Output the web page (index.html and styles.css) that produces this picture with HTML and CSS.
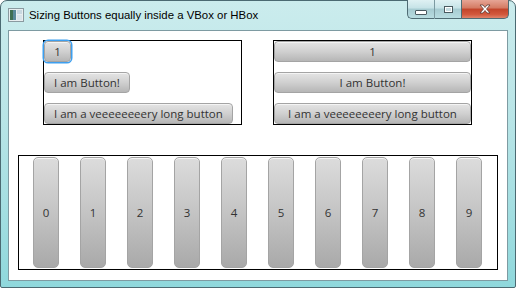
FILE: index.html
```html
<!DOCTYPE html>
<html>
<head>
<meta charset="utf-8">
<link rel="stylesheet" href="styles.css">
</head>
<body>
<div class="window">
  <div class="titlebar">
    <svg class="app-icon" width="16" height="14" viewBox="0 0 16 14">
      <rect x="0.5" y="0.5" width="15" height="13" fill="#e8eef0" stroke="#8a9aa0"/>
      <rect x="2" y="2" width="6" height="10" fill="#5a8a9a"/>
      <rect x="2" y="2" width="3" height="10" fill="#3f6f52"/>
      <rect x="9" y="2" width="5" height="4" fill="#c8d8e0"/>
      <rect x="9" y="7" width="5" height="5" fill="#d8e4ea"/>
    </svg>
    <span class="title">Sizing Buttons equally inside a VBox or HBox</span>
    <div class="caption">
      <div class="cap cap-min"><span class="min-glyph"></span></div>
      <div class="cap cap-max"><span class="max-glyph"></span></div>
      <div class="cap cap-close">
        <svg width="16" height="10" viewBox="0 0 16 10">
          <path d="M3 1 L6 1 L8 3.5 L10 1 L13 1 L9.5 5 L13 9 L10 9 L8 6.5 L6 9 L3 9 L6.5 5 Z" fill="#fff" stroke="#5a3a35" stroke-width="0.8"/>
        </svg>
      </div>
    </div>
  </div>
  <div class="content">
    <div class="top-row">
      <div class="vbox vbox-left">
        <button class="btn focused">1</button>
        <button class="btn">I am Button!</button>
        <button class="btn">I am a veeeeeeeery long button</button>
      </div>
      <div class="vbox vbox-right">
        <button class="btn">1</button>
        <button class="btn">I am Button!</button>
        <button class="btn">I am a veeeeeeeery long button</button>
      </div>
    </div>
    <div class="hbox">
      <button class="btn vbtn">0</button>
      <button class="btn vbtn">1</button>
      <button class="btn vbtn">2</button>
      <button class="btn vbtn">3</button>
      <button class="btn vbtn">4</button>
      <button class="btn vbtn">5</button>
      <button class="btn vbtn">6</button>
      <button class="btn vbtn">7</button>
      <button class="btn vbtn">8</button>
      <button class="btn vbtn">9</button>
    </div>
  </div>
</div>
</body>
</html>
```
FILE: styles.css
```css
html, body {
  margin: 0;
  padding: 0;
  background: #ffffff;
}
.window {
  width: 516px;
  height: 288px;
  box-sizing: border-box;
  position: relative;
  border: 1px solid #4b6a72;
  border-radius: 7px 7px 2px 2px;
  background: linear-gradient(to bottom, #cbeced 0%, #b9e5e7 40%, #a6dfe2 70%, #8fd8dc 100%);
  padding: 0 7px 6px 7px;
  display: flex;
  flex-direction: column;
  font-family: "Open Sans", "Noto Sans", sans-serif;
}
.titlebar {
  height: 29px;
  display: flex;
  align-items: flex-start;
  position: relative;
}
.app-icon {
  margin-top: 7px;
  margin-left: 0;
  flex: none;
}
.title {
  margin-left: 5px;
  margin-top: 6px;
  font-family: "Liberation Sans", Arial, sans-serif;
  font-size: 11.4px;
  color: #000;
  line-height: 16px;
}
.caption {
  position: absolute;
  top: -1px;
  right: -1px;
  display: flex;
  height: 19px;
}
.cap {
  height: 18px;
  border: 1px solid #4f6c74;
  border-top: none;
  display: flex;
  align-items: center;
  justify-content: center;
  box-sizing: content-box;
}
.cap-min {
  width: 26px;
  border-radius: 0 0 0 5px;
  border-right: 1px solid #7c9aa1;
  background: linear-gradient(to bottom, #dff1f3 0%, #c6e3e7 45%, #a6cbd1 50%, #b8dde1 100%);
}
.cap-max {
  width: 26px;
  border-left: none;
  border-right: none;
  background: linear-gradient(to bottom, #dff1f3 0%, #c6e3e7 45%, #a6cbd1 50%, #b8dde1 100%);
}
.cap-close {
  width: 46px;
  border-radius: 0 0 5px 0;
  background: linear-gradient(to bottom, #e6a595 0%, #d47a62 45%, #c2442a 50%, #d2583c 80%, #e0836a 100%);
}
.min-glyph {
  display: block;
  width: 10px;
  height: 3px;
  margin-top: 6px;
  background: #fff;
  border: 1px solid #4a5a60;
  border-radius: 1px;
}
.max-glyph {
  display: block;
  width: 7px;
  height: 5px;
  border: 1px solid #4a5a60;
  outline: 1px solid #fff;
  outline-offset: -2px;
  background: #c6dde2;
  box-shadow: inset 0 0 0 1px #fff;
}
.content {
  flex: 1;
  background: #ffffff;
  border: 1px solid #7e9ba2;
  display: flex;
  flex-direction: column;
  padding: 9px 9px 0 9px;
}
.top-row {
  display: flex;
  padding-left: 25px;
  gap: 31px;
}
.vbox {
  border: 1px solid #000;
  height: 83px;
  display: flex;
  flex-direction: column;
  gap: 10px;
}
.vbox-left {
  width: 197px;
  align-items: flex-start;
}
.vbox-right {
  width: 197px;
  align-items: stretch;
}
.btn {
  font-family: "Open Sans", sans-serif;
  font-size: 11.5px;
  color: #333;
  height: 21px;
  line-height: 17px;
  padding: 0 9px;
  margin: 0;
  border: 1px solid #a4a4a4;
  border-radius: 4px;
  background: linear-gradient(to bottom, #e4e4e4 0%, #d0d0d0 50%, #b6b6b6 100%);
  box-shadow: inset 0 1px 0 #f4f4f4;
  white-space: nowrap;
  box-sizing: border-box;
}
.focused {
  width: 27px;
  padding: 0;
  box-shadow: 0 0 0 1.5px #3d9ff0, inset 0 1px 0 #f4f4f4;
}
.hbox {
  margin-top: 30px;
  height: 112px;
  border: 1px solid #000;
  display: flex;
  padding: 1px 15px 0 14px;
  justify-content: space-between;
}
.vbtn {
  width: 26px;
  height: 111px;
  padding: 0;
  border-radius: 5px;
  background: linear-gradient(to bottom, #dcdcdc 0%, #c4c4c4 50%, #a9a9a9 100%);
}
```
